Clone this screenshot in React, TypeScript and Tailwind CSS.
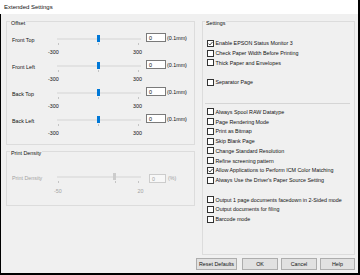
import React from "react";

function OffsetRow({ label }: { label: string }) {
  return (
    <div className="h-[27px] flex items-start">
      <div className="w-[45px] ml-[5px] mt-[5px] leading-[6px]">{label}</div>
      <div className="w-[84px] mt-[3px] flex flex-col">
        <div className="relative h-[7px]">
          <div className="absolute left-0 right-0 top-[2.5px] h-[2px] bg-[#e2e2e2]" />
          <div className="absolute left-[40px] top-0 w-[3px] h-[7px] bg-[#0078d7]" />
        </div>
        <div className="mt-[1px] h-[2px] flex justify-between pl-[1px] pr-[2px]">
          <span className="w-[1px] h-[2px] bg-[#c4c4c4]" />
          <span className="w-[1px] h-[2px] bg-[#c4c4c4]" />
          <span className="w-[1px] h-[2px] bg-[#c4c4c4]" />
        </div>
        <div className="mt-[4px] flex justify-between -ml-[9px] -mr-[1px] leading-[6px]">
          <span>-300</span>
          <span>300</span>
        </div>
      </div>
      <div className="ml-[5px] mt-[1px] w-[20px] h-[9px] bg-white border border-[#7a7a7a] flex items-center pl-[2px] leading-[6px]">
        0
      </div>
      <div className="ml-[1px] mt-[2.7px] leading-[6px]">(0.1mm)</div>
    </div>
  );
}

function Check({ label, checked }: { label: string; checked?: boolean }) {
  return (
    <div className="h-[9.75px] flex items-center">
      <div className="w-[7px] h-[7px] border border-[#333333] bg-white flex items-center justify-center">
        {checked && (
          <svg width="5" height="5" viewBox="0 0 5 5">
            <path d="M0.5 2.6 L1.9 4 L4.6 0.9" stroke="#333" strokeWidth="0.9" fill="none" />
          </svg>
        )}
      </div>
      <span className="ml-[1.5px] leading-[6px] whitespace-nowrap">{label}</span>
    </div>
  );
}

function Btn({ label, w, cls }: { label: string; w: string; cls: string }) {
  return (
    <div
      className={`${w} ${cls} h-[12px] bg-[#e1e1e1] border border-[#adadad] flex items-center justify-center leading-[6px]`}
    >
      {label}
    </div>
  );
}

export default function App() {
  return (
    <div className="w-[360px] h-[275px] bg-white flex flex-col font-['Liberation_Sans',Arial,sans-serif] text-[5.35px] text-[#111111] overflow-hidden">
      <div className="h-[14px] shrink-0 bg-white border-r-2 border-black flex items-center pl-[4px] text-[6px] leading-[7px]">
        Extended Settings
      </div>
      <div className="flex-1 bg-[#f0f0f0] border-l border-r-2 border-b-2 border-black flex flex-col">
        <div className="mt-[7px] flex items-start">
          {/* left column */}
          <div className="ml-[5px] w-[189px] flex flex-col">
            <div className="h-[124px] border border-[#dcdcdc] flex flex-col">
              <div className="-mt-[2px] ml-[3px] w-fit px-[1px] bg-[#f0f0f0] leading-[6px]">Offset</div>
              <div className="mt-[6px] flex flex-col">
                <OffsetRow label="Front Top" />
                <OffsetRow label="Front Left" />
                <OffsetRow label="Back Top" />
                <OffsetRow label="Back Left" />
              </div>
            </div>
            <div className="mt-[6px] h-[55px] border border-[#dcdcdc] flex flex-col">
              <div className="-mt-[2px] ml-[3px] w-fit px-[1px] bg-[#f0f0f0] leading-[6px]">Print Density</div>
              <div className="mt-[17px] flex items-start">
                <div className="w-[45px] ml-[5px] mt-[2px] leading-[6px] text-[#a3a3a3]">Print Density</div>
                <div className="w-[84px] flex flex-col">
                  <div className="relative h-[7px]">
                    <div className="absolute left-0 right-0 top-[2.5px] h-[2px] bg-[#e2e2e2]" />
                    <div className="absolute left-[56px] top-0 w-[3px] h-[7px] bg-[#cccccc]" />
                  </div>
                  <div className="mt-[1px] h-[2px] flex">
                    <span className="ml-[1px] w-[1px] h-[2px] bg-[#c4c4c4]" />
                    <span className="ml-[56px] w-[1px] h-[2px] bg-[#c4c4c4]" />
                    <span className="ml-[22px] w-[1px] h-[2px] bg-[#c4c4c4]" />
                  </div>
                  <div className="mt-[5px] flex justify-between -ml-[3px] -mr-[2.5px] leading-[6px] text-[#a3a3a3]">
                    <span>-50</span>
                    <span>20</span>
                  </div>
                </div>
                <div className="ml-[8px] mt-[1px] w-[17px] h-[9px] bg-[#f7f7f7] border border-[#cccccc] flex items-center pl-[2px] leading-[6px] text-[#a3a3a3]">
                  0
                </div>
                <div className="ml-[2px] mt-[2px] leading-[6px] text-[#a3a3a3]">(%)</div>
              </div>
            </div>
          </div>
          {/* right column */}
          <div className="ml-[7px] w-[153px] h-[234px] border border-[#dcdcdc] flex flex-col">
            <div className="-mt-[2px] ml-[2px] w-fit px-[1px] bg-[#f0f0f0] leading-[6px]">Settings</div>
            <div className="ml-[4px] mt-[12.6px] flex flex-col">
              <Check label="Enable EPSON Status Monitor 3" checked />
              <Check label="Check Paper Width Before Printing" />
              <Check label="Thick Paper and Envelopes" />
              <div className="h-[9.75px]" />
              <Check label="Separator Page" />
            </div>
            <div className="ml-[2px] mr-[4px] mt-[15.6px] h-[1px] bg-[#d5d5d5]" />
            <div className="ml-[4px] mt-[3.1px] flex flex-col">
              <Check label="Always Spool RAW Datatype" />
              <Check label="Page Rendering Mode" />
              <Check label="Print as Bitmap" />
              <Check label="Skip Blank Page" />
              <Check label="Change Standard Resolution" />
              <Check label="Refine screening pattern" />
              <Check label="Allow Applications to Perform ICM Color Matching" checked />
              <Check label="Always Use the Driver's Paper Source Setting" />
              <div className="h-[9.75px]" />
              <Check label="Output 1 page documents facedown in 2-Sided mode" />
              <Check label="Output documents for filing" />
              <Check label="Barcode mode" />
            </div>
          </div>
        </div>
        <div className="mt-[3px] flex">
          <Btn label="Reset Defaults" w="w-[41px]" cls="ml-[195px]" />
          <Btn label="OK" w="w-[36px]" cls="ml-[5px] border-[#0078d7]" />
          <Btn label="Cancel" w="w-[36px]" cls="ml-[3px]" />
          <Btn label="Help" w="w-[35px]" cls="ml-[3px]" />
        </div>
      </div>
    </div>
  );
}
